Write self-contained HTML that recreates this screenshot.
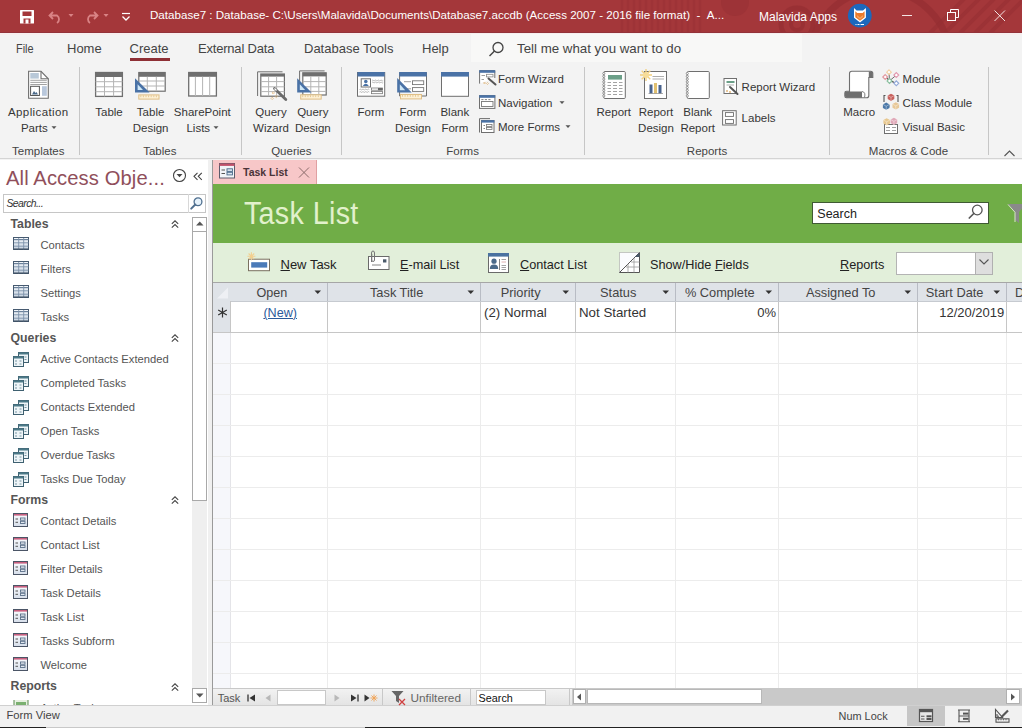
<!DOCTYPE html>
<html><head><meta charset="utf-8">
<style>
*{margin:0;padding:0;box-sizing:border-box}
html,body{width:1022px;height:728px;overflow:hidden;background:#f3f3f3;font-family:"Liberation Sans",sans-serif;color:#444;position:relative}
.a{position:absolute}
.t{position:absolute;white-space:nowrap;line-height:1}
svg{overflow:visible}
</style></head>
<body>
<div class="a" style="left:0px;top:0px;width:1022px;height:33px;background:#a4373a"></div>
<svg class="a" style="left:0px;top:0px;" width="1022" height="33" viewBox="0 0 1022 33"><defs><clipPath id="tb"><rect x="0" y="0" width="1022" height="33"/></clipPath></defs>
<g clip-path="url(#tb)" fill="none" stroke="#962f33" stroke-opacity="0.75">
<path d="M622 0 V33 M628 0 V33 M634 0 V33 M640 0 V33 M646 0 V33 M652 0 V33 M658 0 V33 M664 0 V33 M670 0 V33 M676 0 V33 M682 0 V33 M688 0 V33 M694 0 V33 M700 0 V33" stroke-width="2.5" stroke-opacity="0.35"/>
<circle cx="735" cy="2" r="14" fill="#962f33" stroke="none" fill-opacity="0.5"/>
<circle cx="797" cy="24" r="16" stroke-width="5"/>
<circle cx="797" cy="24" r="6" stroke-width="4"/>
<circle cx="880" cy="60" r="70" stroke-width="7"/>
<path d="M930 33 L975 -12 M945 33 L990 -12 M960 33 L1005 -12 M975 33 L1020 -12 M990 33 L1035 -12" stroke-width="4" stroke-opacity="0.55"/>
</g></svg>
<svg class="a" style="left:19px;top:9px;" width="16" height="15" viewBox="0 0 16 15"><rect x="1" y="1" width="14" height="13.5" fill="#fff" rx="0.5"/><rect x="3.5" y="2.5" width="9" height="4.5" fill="#a4373a"/><rect x="4.5" y="9.5" width="7" height="5" fill="#a4373a"/><rect x="6.5" y="10.5" width="3" height="4" fill="#fff"/></svg>
<svg class="a" style="left:48px;top:10px;" width="16" height="14" viewBox="0 0 16 14"><path d="M5 2 L1.5 5.5 L5 9 M1.5 5.5 H9 A4.5 4.5 0 0 1 9 13" fill="none" stroke="#d98385" stroke-width="1.8"/></svg>
<svg class="a" style="left:68px;top:13px;" width="6" height="5" viewBox="0 0 6 5"><path d="M0.5 1 H5.5 L3 4 Z" fill="#d98385"/></svg>
<svg class="a" style="left:83px;top:10px;" width="16" height="14" viewBox="0 0 16 14"><path d="M11 2 L14.5 5.5 L11 9 M14.5 5.5 H7 A4.5 4.5 0 0 0 7 13" fill="none" stroke="#d98385" stroke-width="1.8"/></svg>
<svg class="a" style="left:103px;top:13px;" width="6" height="5" viewBox="0 0 6 5"><path d="M0.5 1 H5.5 L3 4 Z" fill="#d98385"/></svg>
<svg class="a" style="left:121px;top:12px;" width="10" height="9" viewBox="0 0 10 9"><path d="M1 1.5 H9" stroke="#fff" stroke-width="1.2"/><path d="M1.5 4.5 L5 8 L8.5 4.5" fill="none" stroke="#fff" stroke-width="1.3"/></svg>
<div class="t" style="font-size:11.6px;color:#fff;top:9.00px;left:150px;">Database7 : Database- C:\Users\Malavida\Documents\Database7.accdb (Access 2007 - 2016 file format) &nbsp;- &nbsp;A...</div>
<div class="t" style="font-size:12px;color:#fff;top:11.00px;left:759px;">Malavida Apps</div>
<svg class="a" style="left:847px;top:3px;" width="26" height="26" viewBox="0 0 26 26"><circle cx="12.8" cy="12.6" r="11.9" fill="#1c68bd"/>
<path d="M7 4.9 L9.6 7.6 H16 L18.9 4.9 V14.8 L13 19.6 L7 14.8 Z" fill="#fff"/>
<path d="M8.3 8.2 L10.2 10 H15.6 L17.6 8.2 V14.3 L13 17.8 L8.3 14.3 Z" fill="#ec7a2a"/>
<path d="M10 12 L13 14.5 L16 12 V14 L13 16.5 L10 14 Z" fill="#f6b070" opacity="0.7"/>
<path d="M8.5 21.5 H9.5 M10.5 21.5 H12.5 M13.5 21.5 H17" stroke="#fff" stroke-width="1"/></svg>
<div class="a" style="left:902px;top:15px;width:10px;height:1px;background:#f4e4e4"></div>
<svg class="a" style="left:947px;top:9px;" width="12" height="12" viewBox="0 0 12 12"><rect x="0.5" y="3.5" width="8" height="8" fill="none" stroke="#fff"/><path d="M3.5 3.5 V0.5 H11.5 V8.5 H8.5" fill="none" stroke="#fff"/></svg>
<svg class="a" style="left:993.5px;top:9.5px;" width="12" height="12" viewBox="0 0 12 12"><path d="M0.5 0.5 L11 11 M11 0.5 L0.5 11" stroke="#f4e4e4" stroke-width="1"/></svg>
<div class="a" style="left:0px;top:33px;width:1022px;height:30px;background:#f3f3f3"></div>
<div class="a" style="left:0px;top:32px;width:1022px;height:1px;background:#93333a"></div>
<div class="a" style="left:0px;top:33px;width:1022px;height:2px;background:#f7eeee"></div>
<div class="a" style="left:471px;top:34px;width:331px;height:28px;background:#f8f8f7"></div>
<div class="t" style="font-size:13px;color:#444;top:42.00px;left:15.5px;transform:scaleX(0.84);transform-origin:0 0">File</div>
<div class="t" style="font-size:13px;color:#444;top:42.00px;left:67px;">Home</div>
<div class="t" style="font-size:13px;color:#444;top:42.00px;left:129.5px;">Create</div>
<div class="a" style="left:130px;top:58px;width:40px;height:2.6px;background:#8e2f35"></div>
<div class="t" style="font-size:13px;color:#444;top:42.00px;left:198px;letter-spacing:-0.2px">External Data</div>
<div class="t" style="font-size:13px;color:#444;top:42.00px;left:304px;">Database Tools</div>
<div class="t" style="font-size:13px;color:#444;top:42.00px;left:422px;">Help</div>
<svg class="a" style="left:488px;top:40.6px;" width="17" height="17" viewBox="0 0 17 17"><circle cx="10" cy="6.5" r="5" fill="none" stroke="#444" stroke-width="1.3"/><path d="M6.5 10 L1.5 15" stroke="#444" stroke-width="1.5"/></svg>
<div class="t" style="font-size:13.3px;color:#444;top:42.00px;left:517px;">Tell me what you want to do</div>
<div class="a" style="left:0px;top:63px;width:1022px;height:96px;background:#f3f3f3"></div>
<div class="a" style="left:0px;top:158px;width:1022px;height:1px;background:#d4d4d4"></div>
<div class="a" style="left:79px;top:67px;width:1px;height:88px;background:#c6c6c6"></div>
<div class="a" style="left:241px;top:67px;width:1px;height:88px;background:#c6c6c6"></div>
<div class="a" style="left:341px;top:67px;width:1px;height:88px;background:#c6c6c6"></div>
<div class="a" style="left:584px;top:67px;width:1px;height:88px;background:#c6c6c6"></div>
<div class="a" style="left:829px;top:67px;width:1px;height:88px;background:#c6c6c6"></div>
<div class="a" style="left:988px;top:67px;width:1px;height:88px;background:#c6c6c6"></div>
<div class="t" style="font-size:11.5px;color:#363636;top:107.00px;left:-1.7000000000000028px;width:80px;text-align:center;letter-spacing:0.4px">Application</div>
<div class="t" style="font-size:11.5px;color:#363636;top:123.00px;left:-5.700000000000003px;width:80px;text-align:center;">Parts</div>
<div class="t" style="font-size:11.5px;color:#363636;top:107.00px;left:69.0px;width:80px;text-align:center;">Table</div>
<div class="t" style="font-size:11.5px;color:#363636;top:107.00px;left:110.6px;width:80px;text-align:center;">Table</div>
<div class="t" style="font-size:11.5px;color:#363636;top:123.00px;left:110.6px;width:80px;text-align:center;">Design</div>
<div class="t" style="font-size:11.5px;color:#363636;top:107.00px;left:162.3px;width:80px;text-align:center;">SharePoint</div>
<div class="t" style="font-size:11.5px;color:#363636;top:123.00px;left:158.3px;width:80px;text-align:center;">Lists</div>
<div class="t" style="font-size:11.5px;color:#363636;top:107.00px;left:231.0px;width:80px;text-align:center;">Query</div>
<div class="t" style="font-size:11.5px;color:#363636;top:123.00px;left:231.0px;width:80px;text-align:center;">Wizard</div>
<div class="t" style="font-size:11.5px;color:#363636;top:107.00px;left:272.8px;width:80px;text-align:center;">Query</div>
<div class="t" style="font-size:11.5px;color:#363636;top:123.00px;left:272.8px;width:80px;text-align:center;">Design</div>
<div class="t" style="font-size:11.5px;color:#363636;top:107.00px;left:331.0px;width:80px;text-align:center;">Form</div>
<div class="t" style="font-size:11.5px;color:#363636;top:107.00px;left:373.0px;width:80px;text-align:center;">Form</div>
<div class="t" style="font-size:11.5px;color:#363636;top:123.00px;left:373.0px;width:80px;text-align:center;">Design</div>
<div class="t" style="font-size:11.5px;color:#363636;top:107.00px;left:414.8px;width:80px;text-align:center;">Blank</div>
<div class="t" style="font-size:11.5px;color:#363636;top:123.00px;left:414.8px;width:80px;text-align:center;">Form</div>
<div class="t" style="font-size:11.5px;color:#363636;top:107.00px;left:573.8px;width:80px;text-align:center;">Report</div>
<div class="t" style="font-size:11.5px;color:#363636;top:107.00px;left:616.0px;width:80px;text-align:center;">Report</div>
<div class="t" style="font-size:11.5px;color:#363636;top:123.00px;left:616.0px;width:80px;text-align:center;">Design</div>
<div class="t" style="font-size:11.5px;color:#363636;top:107.00px;left:657.7px;width:80px;text-align:center;">Blank</div>
<div class="t" style="font-size:11.5px;color:#363636;top:123.00px;left:657.7px;width:80px;text-align:center;">Report</div>
<div class="t" style="font-size:11.5px;color:#363636;top:107.00px;left:819.2px;width:80px;text-align:center;">Macro</div>
<svg class="a" style="left:51px;top:126px;" width="6" height="4" viewBox="0 0 6 4"><path d="M0.5 0.3 H5.5 L3 3 Z" fill="#555"/></svg>
<svg class="a" style="left:213px;top:126px;" width="6" height="4" viewBox="0 0 6 4"><path d="M0.5 0.3 H5.5 L3 3 Z" fill="#555"/></svg>
<div class="t" style="font-size:11.5px;color:#444;top:146.00px;left:-21.700000000000003px;width:120px;text-align:center;">Templates</div>
<div class="t" style="font-size:11.5px;color:#444;top:146.00px;left:99.80000000000001px;width:120px;text-align:center;">Tables</div>
<div class="t" style="font-size:11.5px;color:#444;top:146.00px;left:231.3px;width:120px;text-align:center;">Queries</div>
<div class="t" style="font-size:11.5px;color:#444;top:146.00px;left:402.6px;width:120px;text-align:center;">Forms</div>
<div class="t" style="font-size:11.5px;color:#444;top:146.00px;left:647.0px;width:120px;text-align:center;">Reports</div>
<div class="t" style="font-size:11.5px;color:#444;top:146.00px;left:848.5px;width:120px;text-align:center;">Macros &amp; Code</div>
<div class="t" style="font-size:11.5px;color:#363636;top:74.00px;left:498px;">Form Wizard</div>
<div class="t" style="font-size:11.5px;color:#363636;top:98.00px;left:498px;">Navigation</div>
<svg class="a" style="left:559px;top:101px;" width="6" height="4" viewBox="0 0 6 4"><path d="M0.5 0.3 H5.5 L3 3 Z" fill="#555"/></svg>
<div class="t" style="font-size:11.5px;color:#363636;top:122.00px;left:498px;">More Forms</div>
<svg class="a" style="left:565px;top:125px;" width="6" height="4" viewBox="0 0 6 4"><path d="M0.5 0.3 H5.5 L3 3 Z" fill="#555"/></svg>
<div class="t" style="font-size:11.5px;color:#363636;top:82.00px;left:741.6px;">Report Wizard</div>
<div class="t" style="font-size:11.5px;color:#363636;top:113.00px;left:741.6px;">Labels</div>
<div class="t" style="font-size:11.5px;color:#363636;top:74.00px;left:902.6px;">Module</div>
<div class="t" style="font-size:11.5px;color:#363636;top:98.00px;left:902.6px;">Class Module</div>
<div class="t" style="font-size:11.5px;color:#363636;top:122.00px;left:902.6px;">Visual Basic</div>
<svg class="a" style="left:1003.5px;top:149.5px;" width="11" height="7" viewBox="0 0 11 7"><path d="M0.5 6 L5.5 1 L10.5 6" fill="none" stroke="#555" stroke-width="1.1"/></svg>
<svg class="a" style="left:0px;top:0px;" width="60" height="110" viewBox="0 0 60 110">
<path d="M28.6 71.3 H41 L48.3 78.8 V98.3 H28.6 Z" fill="#fff" stroke="#6f6f6f" stroke-width="1.1"/>
<path d="M41 71.3 V78.8 H48.3" fill="none" stroke="#6f6f6f" stroke-width="1.1"/>
<rect x="30.3" y="73" width="8.5" height="5.6" fill="#b8c8d8"/>
<path d="M30.3 80.3 H46.8 M30.3 82.4 H46.8 M30.3 84.5 H46.8" stroke="#8a8a8a" stroke-width="0.8"/>
<rect x="30.6" y="86.3" width="8.8" height="9.2" fill="#fff" stroke="#555" stroke-width="1"/>
<path d="M32 94.5 L34 91 L35.5 93 L36.5 92 L38 94.5 Z" fill="#4b6a8a"/>
<rect x="42" y="86.2" width="4.8" height="9.6" fill="#b9c8dc"/>
</svg>
<svg class="a" style="left:0px;top:0px;" width="140" height="110" viewBox="0 0 140 110"><rect x="95.6" y="72.5" width="26.80000000000001" height="23.900000000000006" fill="#fff" stroke="#6f6f6f" stroke-width="1.3"/><rect x="95.6" y="72.5" width="26.80000000000001" height="4.5" fill="#6f6f6f"/><path d="M104.5 77 V96.4" stroke="#b4b4b4" stroke-width="1"/><path d="M113.6 77 V96.4" stroke="#b4b4b4" stroke-width="1"/><path d="M95.6 81.7 H122.4" stroke="#b4b4b4" stroke-width="1"/><path d="M95.6 86.8 H122.4" stroke="#b4b4b4" stroke-width="1"/><path d="M95.6 91.7 H122.4" stroke="#b4b4b4" stroke-width="1"/></svg>
<svg class="a" style="left:0px;top:0px;" width="180" height="110" viewBox="0 0 180 110"><rect x="138.8" y="72.5" width="26.399999999999977" height="18.700000000000003" fill="#fff" stroke="#6f6f6f" stroke-width="1.2"/><rect x="138.8" y="72.5" width="26.399999999999977" height="4.299999999999997" fill="#6f6f6f"/><path d="M147.3 76.8 V91.2" stroke="#b4b4b4" stroke-width="1"/><path d="M156.3 76.8 V91.2" stroke="#b4b4b4" stroke-width="1"/><path d="M138.8 81 H165.2" stroke="#b4b4b4" stroke-width="1"/><path d="M138.8 86 H165.2" stroke="#b4b4b4" stroke-width="1"/><path d="M135 78.2 L149.6 92.4 H135 Z" fill="#4a72a6"/><path d="M137.6 84.164 L143.03 90.0 H137.6 Z" fill="#cfe8f8"/><rect x="138.8" y="94.9" width="20.19999999999999" height="4.199999999999989" fill="#fdf1d6" stroke="#e0bf86" stroke-width="1"/><path d="M140.8 95.4 V97.2" stroke="#e0bf86" stroke-width="0.8"/><path d="M143.4 95.4 V97.2" stroke="#e0bf86" stroke-width="0.8"/><path d="M146.0 95.4 V97.2" stroke="#e0bf86" stroke-width="0.8"/><path d="M148.6 95.4 V97.2" stroke="#e0bf86" stroke-width="0.8"/><path d="M151.2 95.4 V97.2" stroke="#e0bf86" stroke-width="0.8"/><path d="M153.79999999999998 95.4 V97.2" stroke="#e0bf86" stroke-width="0.8"/><path d="M156.39999999999998 95.4 V97.2" stroke="#e0bf86" stroke-width="0.8"/></svg>
<svg class="a" style="left:0px;top:0px;" width="230" height="110" viewBox="0 0 230 110"><rect x="188.7" y="72.5" width="27.700000000000017" height="23.5" fill="#fff" stroke="#6f6f6f" stroke-width="1.3"/><rect x="188.7" y="72.5" width="27.700000000000017" height="4.299999999999997" fill="#6f6f6f"/><path d="M195.4 76.8 V96" stroke="#b4b4b4" stroke-width="1"/><path d="M202.6 76.8 V96" stroke="#b4b4b4" stroke-width="1"/><path d="M209.7 76.8 V96" stroke="#b4b4b4" stroke-width="1"/></svg>
<svg class="a" style="left:0px;top:0px;" width="300" height="110" viewBox="0 0 300 110"><path d="M257.6 96 V71.8 H282.5" fill="none" stroke="#6f6f6f" stroke-width="1"/><rect x="260.8" y="74" width="23.599999999999966" height="22.200000000000003" fill="#fff" stroke="#6f6f6f" stroke-width="1.2"/><rect x="260.8" y="74" width="23.599999999999966" height="2.5999999999999943" fill="#6f6f6f"/><path d="M268.6 76.6 V96.2" stroke="#b4b4b4" stroke-width="1"/><path d="M276.6 76.6 V96.2" stroke="#b4b4b4" stroke-width="1"/><path d="M260.8 81.6 H284.4" stroke="#b4b4b4" stroke-width="1"/><path d="M260.8 86.8 H284.4" stroke="#b4b4b4" stroke-width="1"/><path d="M260.8 91.6 H284.4" stroke="#b4b4b4" stroke-width="1"/><path d="M274.5 88.5 L285.8 99.5" stroke="#6a6a6a" stroke-width="2.8" stroke-linecap="round"/><path d="M274.5 88.5 L276.5 90.5" stroke="#fff" stroke-width="1.2"/><path d="M273.3 91.7 l1.2 1.2 l-1.2 1.2 l-1.2 -1.2 Z M276.3 95.3 l1.2 1.2 l-1.2 1.2 l-1.2 -1.2 Z M272.2 97.2 l1.2 1.2 l-1.2 1.2 l-1.2 -1.2 Z" fill="none" stroke="#e0b070" stroke-width="0.7"/></svg>
<svg class="a" style="left:0px;top:0px;" width="340" height="110" viewBox="0 0 340 110"><path d="M299.6 89 V70.9 H324.6" fill="none" stroke="#6f6f6f" stroke-width="1"/><rect x="302.8" y="72.8" width="23.399999999999977" height="22.200000000000003" fill="#fff" stroke="#6f6f6f" stroke-width="1.2"/><rect x="302.8" y="72.8" width="23.399999999999977" height="3.6000000000000085" fill="#6f6f6f"/><path d="M310.8 76.4 V95" stroke="#b4b4b4" stroke-width="1"/><path d="M318.8 76.4 V95" stroke="#b4b4b4" stroke-width="1"/><path d="M302.8 81.6 H326.2" stroke="#b4b4b4" stroke-width="1"/><path d="M302.8 86.8 H326.2" stroke="#b4b4b4" stroke-width="1"/><path d="M302.8 91.4 H326.2" stroke="#b4b4b4" stroke-width="1"/><path d="M297.2 78.3 L311.6 92.4 H297.2 Z" fill="#4a72a6"/><path d="M299.8 84.222 L305.12 90.0 H299.8 Z" fill="#cfe8f8"/><rect x="300.7" y="94.8" width="20.5" height="4.299999999999997" fill="#fdf1d6" stroke="#e0bf86" stroke-width="1"/><path d="M302.7 95.3 V97.1" stroke="#e0bf86" stroke-width="0.8"/><path d="M305.3 95.3 V97.1" stroke="#e0bf86" stroke-width="0.8"/><path d="M307.90000000000003 95.3 V97.1" stroke="#e0bf86" stroke-width="0.8"/><path d="M310.50000000000006 95.3 V97.1" stroke="#e0bf86" stroke-width="0.8"/><path d="M313.1000000000001 95.3 V97.1" stroke="#e0bf86" stroke-width="0.8"/><path d="M315.7000000000001 95.3 V97.1" stroke="#e0bf86" stroke-width="0.8"/><path d="M318.3000000000001 95.3 V97.1" stroke="#e0bf86" stroke-width="0.8"/></svg>
<svg class="a" style="left:0px;top:0px;" width="400" height="110" viewBox="0 0 400 110">
<rect x="357.5" y="72.5" width="27.2" height="23.7" fill="#fff" stroke="#6f6f6f" stroke-width="1"/>
<rect x="357.5" y="72" width="27.2" height="4.5" fill="#4a72a6"/>
<rect x="361.2" y="78.8" width="9.3" height="8.2" fill="#fff" stroke="#6f6f6f" stroke-width="1"/>
<circle cx="365.8" cy="81.5" r="1.8" fill="#4a72a6"/><path d="M362.8 86 Q365.8 81.5 368.8 86 Z" fill="#4a72a6"/>
<path d="M372 80.5 q0.7 -0.8 1.4 0 t1.4 0 t1.4 0 t1.4 0 t1.4 0 t1.4 0 t1.4 0 t1.4 0 M372 82.5 q0.7 -0.8 1.4 0 t1.4 0 t1.4 0 t1.4 0 t1.4 0 t1.4 0 t1.4 0 t1.4 0" fill="none" stroke="#888" stroke-width="0.6"/>
<path d="M359.5 89.5 q0.7 -0.8 1.4 0 t1.4 0 t1.4 0 t1.4 0 t1.4 0 t1.4 0 t1.4 0 M359.5 92 q0.7 -0.8 1.4 0 t1.4 0 t1.4 0 t1.4 0 t1.4 0 t1.4 0 t1.4 0" fill="none" stroke="#888" stroke-width="0.6"/>
<rect x="371.5" y="88" width="11" height="2.2" fill="#fff" stroke="#777" stroke-width="0.8"/><rect x="378" y="88" width="4.5" height="2.2" fill="#666"/>
<rect x="371.5" y="91.5" width="11" height="2.2" fill="#fff" stroke="#777" stroke-width="0.8"/>
</svg>
<svg class="a" style="left:0px;top:0px;" width="440" height="110" viewBox="0 0 440 110">
<path d="M426.5 93 V72.5 H399.6 V90" fill="#fff" stroke="#6f6f6f" stroke-width="1"/>
<path d="M399.6 90 V96 H426.5 V93" fill="none" stroke="#6f6f6f" stroke-width="1"/>
<rect x="399.2" y="72" width="27.6" height="4.5" fill="#4a72a6"/>
<path d="M404 81.7 H411 M404 88.8 H411" stroke="#888" stroke-width="0.8"/>
<rect x="412.5" y="80.8" width="11.2" height="3.8" fill="#fff" stroke="#777" stroke-width="0.9"/>
<rect x="412.5" y="87.6" width="11.2" height="3.8" fill="#fff" stroke="#777" stroke-width="0.9"/>
<path d="M397.2 78 L411.7 92.6 H397.2 Z" fill="#4a72a6"/><path d="M399.8 84.13199999999999 L405.175 90.19999999999999 H399.8 Z" fill="#cfe8f8"/><rect x="400.5" y="94.5" width="21" height="4.400000000000006" fill="#fdf1d6" stroke="#e0bf86" stroke-width="1"/><path d="M402.5 95 V96.8" stroke="#e0bf86" stroke-width="0.8"/><path d="M405.1 95 V96.8" stroke="#e0bf86" stroke-width="0.8"/><path d="M407.70000000000005 95 V96.8" stroke="#e0bf86" stroke-width="0.8"/><path d="M410.30000000000007 95 V96.8" stroke="#e0bf86" stroke-width="0.8"/><path d="M412.9000000000001 95 V96.8" stroke="#e0bf86" stroke-width="0.8"/><path d="M415.5000000000001 95 V96.8" stroke="#e0bf86" stroke-width="0.8"/><path d="M418.10000000000014 95 V96.8" stroke="#e0bf86" stroke-width="0.8"/></svg>
<svg class="a" style="left:0px;top:0px;" width="480" height="110" viewBox="0 0 480 110"><rect x="441.5" y="72.5" width="27" height="23.8" fill="#fff" stroke="#6f6f6f" stroke-width="1"/><rect x="441" y="72" width="28" height="4.6" fill="#4a72a6"/></svg>
<svg class="a" style="left:0px;top:0px;" width="500" height="140" viewBox="0 0 500 140">
<path d="M479.6 83.6 V70.6 H494.8 V78" fill="#fff" stroke="#6f6f6f" stroke-width="1"/>
<rect x="479.2" y="70.2" width="16" height="2.6" fill="#4a72a6"/>
<path d="M481.5 75.5 H485 M481.5 79.5 H484" stroke="#888" stroke-width="0.8"/>
<rect x="486.5" y="74.3" width="6.5" height="2.6" fill="none" stroke="#888" stroke-width="0.8"/>
<path d="M488.5 78.5 L495.5 84.5" stroke="#555" stroke-width="2" stroke-linecap="round"/>
<path d="M484.5 82 l1 1 l-1 1 l-1 -1 Z M487.5 82.5 l1 1 l-1 1 l-1 -1 Z" fill="none" stroke="#e0b070" stroke-width="0.7"/>
</svg>
<svg class="a" style="left:0px;top:0px;" width="500" height="140" viewBox="0 0 500 140">
<rect x="479.5" y="95.6" width="15.4" height="12.8" fill="#fff" stroke="#6f6f6f" stroke-width="1"/>
<rect x="479.2" y="95.2" width="16" height="2.6" fill="#4a72a6"/>
<path d="M481.3 99.6 H483.5 M484.8 99.6 H487 M488.3 99.6 H490.5" stroke="#777" stroke-width="0.9"/>
<rect x="481.5" y="101.5" width="11.5" height="5" fill="none" stroke="#777" stroke-width="0.9"/>
</svg>
<svg class="a" style="left:0px;top:0px;" width="500" height="140" viewBox="0 0 500 140">
<path d="M479.5 132.5 V118.6 H490" fill="none" stroke="#6f6f6f" stroke-width="1"/>
<rect x="481.5" y="120.5" width="12.5" height="12" fill="#fff" stroke="#6f6f6f" stroke-width="1"/>
<rect x="481.2" y="120.2" width="13.2" height="2.4" fill="#4a72a6"/>
<path d="M483.5 125.5 H485 M483.5 128.5 H485" stroke="#777" stroke-width="0.9"/>
<rect x="486.5" y="124.5" width="5.5" height="2" fill="none" stroke="#777" stroke-width="0.8"/><rect x="486.5" y="127.5" width="5.5" height="2" fill="none" stroke="#777" stroke-width="0.8"/>
</svg>
<svg class="a" style="left:0px;top:0px;" width="640" height="110" viewBox="0 0 640 110">
<rect x="603.8" y="71.5" width="21.5" height="27" fill="#fff" stroke="#6f6f6f" stroke-width="1" rx="1"/>
<rect x="608" y="75" width="14" height="4.6" fill="#6b9f88"/>
<path d="M607.5 82.5 H611 M613 82.5 H617 M619 82.5 H622.5 M607.5 85.5 H611 M613 85.5 H617 M619 85.5 H622.5 M607.5 88.5 H611 M613 88.5 H617 M619 88.5 H622.5 M607.5 91.5 H611 M613 91.5 H617 M619 91.5 H622.5 M607.5 94.5 H611 M613 94.5 H617 M619 94.5 H622.5" stroke="#999" stroke-width="0.9"/>
<circle cx="603.8" cy="73.5" r="1.1" fill="#fff" stroke="#777" stroke-width="0.7"/><circle cx="603.8" cy="76.3" r="1.1" fill="#fff" stroke="#777" stroke-width="0.7"/><circle cx="603.8" cy="79.1" r="1.1" fill="#fff" stroke="#777" stroke-width="0.7"/><circle cx="603.8" cy="81.89999999999999" r="1.1" fill="#fff" stroke="#777" stroke-width="0.7"/><circle cx="603.8" cy="84.69999999999999" r="1.1" fill="#fff" stroke="#777" stroke-width="0.7"/><circle cx="603.8" cy="87.49999999999999" r="1.1" fill="#fff" stroke="#777" stroke-width="0.7"/><circle cx="603.8" cy="90.29999999999998" r="1.1" fill="#fff" stroke="#777" stroke-width="0.7"/><circle cx="603.8" cy="93.09999999999998" r="1.1" fill="#fff" stroke="#777" stroke-width="0.7"/><circle cx="603.8" cy="95.89999999999998" r="1.1" fill="#fff" stroke="#777" stroke-width="0.7"/></svg>
<svg class="a" style="left:0px;top:0px;" width="680" height="110" viewBox="0 0 680 110">
<rect x="644.5" y="71.5" width="22" height="27" fill="#fff" stroke="#6f6f6f" stroke-width="1"/>
<path d="M652.5 76.5 H664 M652.5 79 H664" stroke="#999" stroke-width="0.8"/>
<rect x="649.5" y="84.5" width="3" height="9" fill="#48628c"/><rect x="654" y="83" width="3" height="10.5" fill="#e0c070"/><rect x="658.5" y="85" width="3" height="8.5" fill="#48628c"/>
<path d="M648.5 93.5 H663" stroke="#888" stroke-width="0.7"/>
<g stroke="#f2cf7e" stroke-width="1.3"><path d="M646 69 V81 M640 75 H652 M641.7 70.7 L650.3 79.3 M650.3 70.7 L641.7 79.3"/></g>
<circle cx="646" cy="75" r="3" fill="#f7dc98"/>
</svg>
<svg class="a" style="left:0px;top:0px;" width="720" height="110" viewBox="0 0 720 110"><rect x="687.3" y="71.5" width="22" height="27" fill="#fff" stroke="#6f6f6f" stroke-width="1" rx="1"/><circle cx="687.3" cy="73.5" r="1.1" fill="#fff" stroke="#777" stroke-width="0.7"/><circle cx="687.3" cy="76.3" r="1.1" fill="#fff" stroke="#777" stroke-width="0.7"/><circle cx="687.3" cy="79.1" r="1.1" fill="#fff" stroke="#777" stroke-width="0.7"/><circle cx="687.3" cy="81.89999999999999" r="1.1" fill="#fff" stroke="#777" stroke-width="0.7"/><circle cx="687.3" cy="84.69999999999999" r="1.1" fill="#fff" stroke="#777" stroke-width="0.7"/><circle cx="687.3" cy="87.49999999999999" r="1.1" fill="#fff" stroke="#777" stroke-width="0.7"/><circle cx="687.3" cy="90.29999999999998" r="1.1" fill="#fff" stroke="#777" stroke-width="0.7"/><circle cx="687.3" cy="93.09999999999998" r="1.1" fill="#fff" stroke="#777" stroke-width="0.7"/><circle cx="687.3" cy="95.89999999999998" r="1.1" fill="#fff" stroke="#777" stroke-width="0.7"/></svg>
<svg class="a" style="left:0px;top:0px;" width="760" height="110" viewBox="0 0 760 110">
<rect x="724" y="78.5" width="12.5" height="15" fill="#fff" stroke="#6f6f6f" stroke-width="1"/>
<rect x="726.5" y="81" width="8" height="2" fill="#6b9f88"/>
<path d="M726.5 85 H734" stroke="#999" stroke-width="0.8"/>
<path d="M730 87 L737.5 94" stroke="#555" stroke-width="2" stroke-linecap="round"/>
<path d="M727 90 l1 1 l-1 1 l-1 -1 Z M730 91 l1 1 l-1 1 l-1 -1 Z" fill="none" stroke="#e0b070" stroke-width="0.7"/>
</svg>
<svg class="a" style="left:0px;top:0px;" width="760" height="140" viewBox="0 0 760 140">
<rect x="722.6" y="110.7" width="13.6" height="14.3" fill="#fff" stroke="#6f6f6f" stroke-width="1"/>
<rect x="725.4" y="112.6" width="8.1" height="3.8" fill="none" stroke="#6f6f6f" stroke-width="0.9"/>
<rect x="725.4" y="119.6" width="8.1" height="3.8" fill="none" stroke="#6f6f6f" stroke-width="0.9"/>
</svg>
<svg class="a" style="left:0px;top:0px;" width="880" height="110" viewBox="0 0 880 110">
<path d="M849.5 92 V73.5 Q849.5 71.2 851.8 71.2 H870.5 Q872.8 71.2 872.8 73.5 V77.5 H868.8 V95.5 Q868.8 97.8 866.5 97.8 H846.5 Q844.8 97.8 844.8 96 V93 Q844.8 91.2 846.5 91.2 H849.5" fill="#fff" stroke="#6f6f6f" stroke-width="1.1"/>
<path d="M868.8 71.5 H871 Q872.8 71.5 872.8 73.5 V77.5 H868.8 Z" fill="#6f6f6f"/>
<path d="M845 91.5 H862 V97.8 H846.5 Q845 97.8 845 96 Z" fill="#6f6f6f"/>
<path d="M862 91.5 Q866 92 864.5 97.5" fill="#fff" stroke="#6f6f6f" stroke-width="0.9"/>
</svg>
<svg class="a" style="left:0px;top:0px;" width="910" height="140" viewBox="0 0 910 140">
<path d="M885.2 77 L889.5 80.9 L896.3 83.3 M889 72.2 L889.5 80.9 M896.3 75.1 L889.5 80.9" stroke="#707070" stroke-width="1"/>
<g fill="#fff" stroke-width="1.2">
<path d="M885.2 74.6 l2.4 2.4 l-2.4 2.4 l-2.4 -2.4 Z" stroke="#e29aa0"/>
<path d="M889 69.9 l2.3 2.3 l-2.3 2.3 l-2.3 -2.3 Z" stroke="#f2d2a8"/>
<path d="M896.3 72.7 l2.4 2.4 l-2.4 2.4 l-2.4 -2.4 Z" stroke="#e29ab0"/>
<path d="M889.5 78.5 l2.4 2.4 l-2.4 2.4 l-2.4 -2.4 Z" stroke="#8cc0a0"/>
<path d="M896.3 80.9 l2.4 2.4 l-2.4 2.4 l-2.4 -2.4 Z" stroke="#94aad8"/>
</g>
<path d="M884 102 V95.5 H885.5 M898 102 V95.5 H896.5" fill="none" stroke="#555" stroke-width="1.1"/>
<path d="M887.5 106 H889.5" stroke="#555" stroke-width="1"/>
<path d="M891 93.7 L894.3 95.5 V99.1 L891 100.89999999999999 L887.7 99.1 V95.5 Z" fill="#c8605c"/><path d="M887.7 95.5 L891 97.3 L894.3 95.5 M891 97.3 V100.89999999999999" fill="none" stroke="#fff" stroke-opacity="0.55" stroke-width="0.7"/><path d="M886.2 102.60000000000001 L889.5 104.4 V108.0 L886.2 109.8 L882.9000000000001 108.0 V104.4 Z" fill="#4a78a8"/><path d="M882.9000000000001 104.4 L886.2 106.2 L889.5 104.4 M886.2 106.2 V109.8" fill="none" stroke="#fff" stroke-opacity="0.55" stroke-width="0.7"/><path d="M895.8 102.30000000000001 L899.0999999999999 104.10000000000001 V107.7 L895.8 109.5 L892.5 107.7 V104.10000000000001 Z" fill="#e8c898"/><path d="M892.5 104.10000000000001 L895.8 105.9 L899.0999999999999 104.10000000000001 M895.8 105.9 V109.5" fill="none" stroke="#fff" stroke-opacity="0.55" stroke-width="0.7"/>
<rect x="884.5" y="124.5" width="13" height="9" fill="#fff" stroke="#6f6f6f" stroke-width="1"/>
<path d="M886 127.5 H890 M892 127.5 H896 M886 130.5 H890 M892 130.5 H896" stroke="#888" stroke-width="0.8"/>
<path d="M886.7 118.2 L890.0 120.0 V123.6 L886.7 125.39999999999999 L883.4000000000001 123.6 V120.0 Z" fill="#e8c890"/><path d="M883.4000000000001 120.0 L886.7 121.8 L890.0 120.0 M886.7 121.8 V125.39999999999999" fill="none" stroke="#fff" stroke-opacity="0.55" stroke-width="0.7"/><path d="M893.9 117.7 L897.1999999999999 119.5 V123.1 L893.9 124.89999999999999 L890.6 123.1 V119.5 Z" fill="#e0a8b8"/><path d="M890.6 119.5 L893.9 121.3 L897.1999999999999 119.5 M893.9 121.3 V124.89999999999999" fill="none" stroke="#fff" stroke-opacity="0.55" stroke-width="0.7"/></svg>
<div class="a" style="left:0px;top:160px;width:208px;height:545px;background:#fff"></div>
<div class="a" style="left:208px;top:160px;width:4px;height:545px;background:#f0f0f0"></div>
<div class="a" style="left:212px;top:160px;width:1px;height:546px;background:#9a9a9a"></div>
<div class="t" style="font-size:20.2px;color:#904f5b;top:168.00px;left:6px;letter-spacing:0.1px">All Access Obje...</div>
<svg class="a" style="left:172px;top:168px;" width="15" height="15" viewBox="0 0 15 15"><circle cx="7.5" cy="7.5" r="6" fill="#fff" stroke="#444" stroke-width="1.1"/><path d="M4.5 6 H10.5 L7.5 9.3 Z" fill="#444"/></svg>
<svg class="a" style="left:193px;top:172px;" width="10" height="9" viewBox="0 0 10 9"><path d="M4.5 0.8 L1 4.3 L4.5 7.8 M8.8 0.8 L5.3 4.3 L8.8 7.8" fill="none" stroke="#444" stroke-width="1.1"/></svg>
<div class="a" style="left:3px;top:194px;width:203px;height:19px;background:#fff;border:1px solid #c6c6c6"></div>
<div class="a" style="left:188px;top:194px;width:18px;height:19px;border-left:1px solid #d8d8d8"></div>
<div class="t" style="font-size:10.4px;color:#333;top:199.00px;font-style:italic;left:6.4px;letter-spacing:-0.55px">Search...</div>
<svg class="a" style="left:189px;top:196px;" width="16" height="15" viewBox="0 0 16 15"><circle cx="9" cy="5.8" r="3.9" fill="#e6f2fb" stroke="#4f6f8f" stroke-width="1.3"/><path d="M6.3 8.5 L2.2 12.6" stroke="#4f6f8f" stroke-width="2" stroke-linecap="round"/></svg>
<div class="a" style="left:192px;top:232px;width:15px;height:456px;background:#efefef"></div>
<div class="a" style="left:192px;top:217px;width:15px;height:15px;background:#fff;border:1px solid #a9a9a9"></div>
<svg class="a" style="left:196px;top:221px;" width="8" height="5" viewBox="0 0 8 5"><path d="M0 4.5 H7.5 L3.75 0.5 Z" fill="#555"/></svg>
<div class="a" style="left:192px;top:231px;width:15px;height:270px;background:#fff;border:1px solid #a9a9a9"></div>
<div class="a" style="left:192px;top:688px;width:15px;height:15px;background:#fff;border:1px solid #a9a9a9"></div>
<svg class="a" style="left:196px;top:693px;" width="8" height="5" viewBox="0 0 8 5"><path d="M0 0.5 H7.5 L3.75 4.5 Z" fill="#555"/></svg>
<div class="t" style="font-size:12.3px;color:#555;top:218.00px;font-weight:bold;left:10.5px;">Tables</div>
<svg class="a" style="left:170.5px;top:220.2px;" width="8" height="8" viewBox="0 0 8 8"><path d="M0.8 3.8 L4 0.8 L7.2 3.8 M0.8 7.6 L4 4.6 L7.2 7.6" fill="none" stroke="#444" stroke-width="1.1"/></svg>
<svg class="a" style="left:13px;top:237.2px;" width="17" height="14" viewBox="0 0 17 14"><defs><linearGradient id="tg" x1="0" y1="0" x2="0" y2="1"><stop offset="0" stop-color="#f6f9fc"/><stop offset="1" stop-color="#c3d0de"/></linearGradient></defs>
<rect x="0.5" y="0.5" width="15" height="12" fill="url(#tg)" stroke="#465a70" stroke-width="1"/>
<path d="M1 2.6 H15.5" stroke="#6b819a" stroke-width="1.2"/>
<path d="M5.7 1 V12.5 M10.7 1 V12.5 M1 5.8 H15.5 M1 9.2 H15.5" stroke="#7d92aa" stroke-width="0.9"/>
<path d="M1 12 H15.5" stroke="#3a4a5c" stroke-width="1"/></svg>
<div class="t" style="font-size:11.2px;color:#555;top:240.00px;left:40.5px;">Contacts</div>
<svg class="a" style="left:13px;top:261.2px;" width="17" height="14" viewBox="0 0 17 14"><defs><linearGradient id="tg" x1="0" y1="0" x2="0" y2="1"><stop offset="0" stop-color="#f6f9fc"/><stop offset="1" stop-color="#c3d0de"/></linearGradient></defs>
<rect x="0.5" y="0.5" width="15" height="12" fill="url(#tg)" stroke="#465a70" stroke-width="1"/>
<path d="M1 2.6 H15.5" stroke="#6b819a" stroke-width="1.2"/>
<path d="M5.7 1 V12.5 M10.7 1 V12.5 M1 5.8 H15.5 M1 9.2 H15.5" stroke="#7d92aa" stroke-width="0.9"/>
<path d="M1 12 H15.5" stroke="#3a4a5c" stroke-width="1"/></svg>
<div class="t" style="font-size:11.2px;color:#555;top:264.00px;left:40.5px;">Filters</div>
<svg class="a" style="left:13px;top:285.2px;" width="17" height="14" viewBox="0 0 17 14"><defs><linearGradient id="tg" x1="0" y1="0" x2="0" y2="1"><stop offset="0" stop-color="#f6f9fc"/><stop offset="1" stop-color="#c3d0de"/></linearGradient></defs>
<rect x="0.5" y="0.5" width="15" height="12" fill="url(#tg)" stroke="#465a70" stroke-width="1"/>
<path d="M1 2.6 H15.5" stroke="#6b819a" stroke-width="1.2"/>
<path d="M5.7 1 V12.5 M10.7 1 V12.5 M1 5.8 H15.5 M1 9.2 H15.5" stroke="#7d92aa" stroke-width="0.9"/>
<path d="M1 12 H15.5" stroke="#3a4a5c" stroke-width="1"/></svg>
<div class="t" style="font-size:11.2px;color:#555;top:288.00px;left:40.5px;">Settings</div>
<svg class="a" style="left:13px;top:309.2px;" width="17" height="14" viewBox="0 0 17 14"><defs><linearGradient id="tg" x1="0" y1="0" x2="0" y2="1"><stop offset="0" stop-color="#f6f9fc"/><stop offset="1" stop-color="#c3d0de"/></linearGradient></defs>
<rect x="0.5" y="0.5" width="15" height="12" fill="url(#tg)" stroke="#465a70" stroke-width="1"/>
<path d="M1 2.6 H15.5" stroke="#6b819a" stroke-width="1.2"/>
<path d="M5.7 1 V12.5 M10.7 1 V12.5 M1 5.8 H15.5 M1 9.2 H15.5" stroke="#7d92aa" stroke-width="0.9"/>
<path d="M1 12 H15.5" stroke="#3a4a5c" stroke-width="1"/></svg>
<div class="t" style="font-size:11.2px;color:#555;top:312.00px;left:40.5px;">Tasks</div>
<div class="t" style="font-size:12.3px;color:#555;top:332.00px;font-weight:bold;left:10.5px;">Queries</div>
<svg class="a" style="left:170.5px;top:334.0px;" width="8" height="8" viewBox="0 0 8 8"><path d="M0.8 3.8 L4 0.8 L7.2 3.8 M0.8 7.6 L4 4.6 L7.2 7.6" fill="none" stroke="#444" stroke-width="1.1"/></svg>
<svg class="a" style="left:13px;top:351.7px;" width="17" height="16" viewBox="0 0 17 16"><rect x="5.5" y="0.5" width="10" height="10" fill="#eef5f8" stroke="#3e6070" stroke-width="1"/>
<rect x="5.5" y="0.5" width="10" height="2" fill="#4c7a88"/>
<path d="M7 5 H9 M7 7.5 H9 M11.5 5 H13.5 M11.5 7.5 H13.5" stroke="#6a8a98" stroke-width="0.9"/>
<rect x="0.5" y="4.5" width="10" height="10" fill="#eef5f8" stroke="#3e6070" stroke-width="1"/>
<rect x="0.5" y="4.5" width="10" height="2" fill="#4c7a88"/>
<path d="M2 9 H4 M2 12 H4 M6.5 9 H8.5 M6.5 12 H8.5" stroke="#6a8a98" stroke-width="0.9"/></svg>
<div class="t" style="font-size:11.2px;color:#555;top:354.00px;left:40.5px;">Active Contacts Extended</div>
<svg class="a" style="left:13px;top:375.7px;" width="17" height="16" viewBox="0 0 17 16"><rect x="5.5" y="0.5" width="10" height="10" fill="#eef5f8" stroke="#3e6070" stroke-width="1"/>
<rect x="5.5" y="0.5" width="10" height="2" fill="#4c7a88"/>
<path d="M7 5 H9 M7 7.5 H9 M11.5 5 H13.5 M11.5 7.5 H13.5" stroke="#6a8a98" stroke-width="0.9"/>
<rect x="0.5" y="4.5" width="10" height="10" fill="#eef5f8" stroke="#3e6070" stroke-width="1"/>
<rect x="0.5" y="4.5" width="10" height="2" fill="#4c7a88"/>
<path d="M2 9 H4 M2 12 H4 M6.5 9 H8.5 M6.5 12 H8.5" stroke="#6a8a98" stroke-width="0.9"/></svg>
<div class="t" style="font-size:11.2px;color:#555;top:378.00px;left:40.5px;">Completed Tasks</div>
<svg class="a" style="left:13px;top:399.7px;" width="17" height="16" viewBox="0 0 17 16"><rect x="5.5" y="0.5" width="10" height="10" fill="#eef5f8" stroke="#3e6070" stroke-width="1"/>
<rect x="5.5" y="0.5" width="10" height="2" fill="#4c7a88"/>
<path d="M7 5 H9 M7 7.5 H9 M11.5 5 H13.5 M11.5 7.5 H13.5" stroke="#6a8a98" stroke-width="0.9"/>
<rect x="0.5" y="4.5" width="10" height="10" fill="#eef5f8" stroke="#3e6070" stroke-width="1"/>
<rect x="0.5" y="4.5" width="10" height="2" fill="#4c7a88"/>
<path d="M2 9 H4 M2 12 H4 M6.5 9 H8.5 M6.5 12 H8.5" stroke="#6a8a98" stroke-width="0.9"/></svg>
<div class="t" style="font-size:11.2px;color:#555;top:402.00px;left:40.5px;">Contacts Extended</div>
<svg class="a" style="left:13px;top:423.7px;" width="17" height="16" viewBox="0 0 17 16"><rect x="5.5" y="0.5" width="10" height="10" fill="#eef5f8" stroke="#3e6070" stroke-width="1"/>
<rect x="5.5" y="0.5" width="10" height="2" fill="#4c7a88"/>
<path d="M7 5 H9 M7 7.5 H9 M11.5 5 H13.5 M11.5 7.5 H13.5" stroke="#6a8a98" stroke-width="0.9"/>
<rect x="0.5" y="4.5" width="10" height="10" fill="#eef5f8" stroke="#3e6070" stroke-width="1"/>
<rect x="0.5" y="4.5" width="10" height="2" fill="#4c7a88"/>
<path d="M2 9 H4 M2 12 H4 M6.5 9 H8.5 M6.5 12 H8.5" stroke="#6a8a98" stroke-width="0.9"/></svg>
<div class="t" style="font-size:11.2px;color:#555;top:426.00px;left:40.5px;">Open Tasks</div>
<svg class="a" style="left:13px;top:447.7px;" width="17" height="16" viewBox="0 0 17 16"><rect x="5.5" y="0.5" width="10" height="10" fill="#eef5f8" stroke="#3e6070" stroke-width="1"/>
<rect x="5.5" y="0.5" width="10" height="2" fill="#4c7a88"/>
<path d="M7 5 H9 M7 7.5 H9 M11.5 5 H13.5 M11.5 7.5 H13.5" stroke="#6a8a98" stroke-width="0.9"/>
<rect x="0.5" y="4.5" width="10" height="10" fill="#eef5f8" stroke="#3e6070" stroke-width="1"/>
<rect x="0.5" y="4.5" width="10" height="2" fill="#4c7a88"/>
<path d="M2 9 H4 M2 12 H4 M6.5 9 H8.5 M6.5 12 H8.5" stroke="#6a8a98" stroke-width="0.9"/></svg>
<div class="t" style="font-size:11.2px;color:#555;top:450.00px;left:40.5px;">Overdue Tasks</div>
<svg class="a" style="left:13px;top:471.7px;" width="17" height="16" viewBox="0 0 17 16"><rect x="5.5" y="0.5" width="10" height="10" fill="#eef5f8" stroke="#3e6070" stroke-width="1"/>
<rect x="5.5" y="0.5" width="10" height="2" fill="#4c7a88"/>
<path d="M7 5 H9 M7 7.5 H9 M11.5 5 H13.5 M11.5 7.5 H13.5" stroke="#6a8a98" stroke-width="0.9"/>
<rect x="0.5" y="4.5" width="10" height="10" fill="#eef5f8" stroke="#3e6070" stroke-width="1"/>
<rect x="0.5" y="4.5" width="10" height="2" fill="#4c7a88"/>
<path d="M2 9 H4 M2 12 H4 M6.5 9 H8.5 M6.5 12 H8.5" stroke="#6a8a98" stroke-width="0.9"/></svg>
<div class="t" style="font-size:11.2px;color:#555;top:474.00px;left:40.5px;">Tasks Due Today</div>
<div class="t" style="font-size:12.3px;color:#555;top:494.00px;font-weight:bold;left:10.5px;">Forms</div>
<svg class="a" style="left:170.5px;top:496.2px;" width="8" height="8" viewBox="0 0 8 8"><path d="M0.8 3.8 L4 0.8 L7.2 3.8 M0.8 7.6 L4 4.6 L7.2 7.6" fill="none" stroke="#444" stroke-width="1.1"/></svg>
<svg class="a" style="left:13px;top:513.2px;" width="16" height="15" viewBox="0 0 16 15"><defs><linearGradient id="fg" x1="0" y1="0" x2="0" y2="1"><stop offset="0" stop-color="#fbfcfe"/><stop offset="1" stop-color="#d6deea"/></linearGradient></defs>
<rect x="0.5" y="0.5" width="14" height="13" fill="url(#fg)" stroke="#4b5566" stroke-width="1"/>
<rect x="1" y="1" width="13" height="1.6" fill="#c86080"/>
<path d="M2.5 6 H5 M2.5 9.3 H5" stroke="#555" stroke-width="1"/>
<rect x="7.5" y="5" width="4.5" height="2.2" fill="none" stroke="#5a6f88" stroke-width="0.9"/>
<rect x="7.5" y="8.3" width="4.5" height="2.2" fill="none" stroke="#5a6f88" stroke-width="0.9"/></svg>
<div class="t" style="font-size:11.2px;color:#555;top:516.00px;left:40.5px;">Contact Details</div>
<svg class="a" style="left:13px;top:537.2px;" width="16" height="15" viewBox="0 0 16 15"><defs><linearGradient id="fg" x1="0" y1="0" x2="0" y2="1"><stop offset="0" stop-color="#fbfcfe"/><stop offset="1" stop-color="#d6deea"/></linearGradient></defs>
<rect x="0.5" y="0.5" width="14" height="13" fill="url(#fg)" stroke="#4b5566" stroke-width="1"/>
<rect x="1" y="1" width="13" height="1.6" fill="#c86080"/>
<path d="M2.5 6 H5 M2.5 9.3 H5" stroke="#555" stroke-width="1"/>
<rect x="7.5" y="5" width="4.5" height="2.2" fill="none" stroke="#5a6f88" stroke-width="0.9"/>
<rect x="7.5" y="8.3" width="4.5" height="2.2" fill="none" stroke="#5a6f88" stroke-width="0.9"/></svg>
<div class="t" style="font-size:11.2px;color:#555;top:540.00px;left:40.5px;">Contact List</div>
<svg class="a" style="left:13px;top:561.2px;" width="16" height="15" viewBox="0 0 16 15"><defs><linearGradient id="fg" x1="0" y1="0" x2="0" y2="1"><stop offset="0" stop-color="#fbfcfe"/><stop offset="1" stop-color="#d6deea"/></linearGradient></defs>
<rect x="0.5" y="0.5" width="14" height="13" fill="url(#fg)" stroke="#4b5566" stroke-width="1"/>
<rect x="1" y="1" width="13" height="1.6" fill="#c86080"/>
<path d="M2.5 6 H5 M2.5 9.3 H5" stroke="#555" stroke-width="1"/>
<rect x="7.5" y="5" width="4.5" height="2.2" fill="none" stroke="#5a6f88" stroke-width="0.9"/>
<rect x="7.5" y="8.3" width="4.5" height="2.2" fill="none" stroke="#5a6f88" stroke-width="0.9"/></svg>
<div class="t" style="font-size:11.2px;color:#555;top:564.00px;left:40.5px;">Filter Details</div>
<svg class="a" style="left:13px;top:585.2px;" width="16" height="15" viewBox="0 0 16 15"><defs><linearGradient id="fg" x1="0" y1="0" x2="0" y2="1"><stop offset="0" stop-color="#fbfcfe"/><stop offset="1" stop-color="#d6deea"/></linearGradient></defs>
<rect x="0.5" y="0.5" width="14" height="13" fill="url(#fg)" stroke="#4b5566" stroke-width="1"/>
<rect x="1" y="1" width="13" height="1.6" fill="#c86080"/>
<path d="M2.5 6 H5 M2.5 9.3 H5" stroke="#555" stroke-width="1"/>
<rect x="7.5" y="5" width="4.5" height="2.2" fill="none" stroke="#5a6f88" stroke-width="0.9"/>
<rect x="7.5" y="8.3" width="4.5" height="2.2" fill="none" stroke="#5a6f88" stroke-width="0.9"/></svg>
<div class="t" style="font-size:11.2px;color:#555;top:588.00px;left:40.5px;">Task Details</div>
<svg class="a" style="left:13px;top:609.2px;" width="16" height="15" viewBox="0 0 16 15"><defs><linearGradient id="fg" x1="0" y1="0" x2="0" y2="1"><stop offset="0" stop-color="#fbfcfe"/><stop offset="1" stop-color="#d6deea"/></linearGradient></defs>
<rect x="0.5" y="0.5" width="14" height="13" fill="url(#fg)" stroke="#4b5566" stroke-width="1"/>
<rect x="1" y="1" width="13" height="1.6" fill="#c86080"/>
<path d="M2.5 6 H5 M2.5 9.3 H5" stroke="#555" stroke-width="1"/>
<rect x="7.5" y="5" width="4.5" height="2.2" fill="none" stroke="#5a6f88" stroke-width="0.9"/>
<rect x="7.5" y="8.3" width="4.5" height="2.2" fill="none" stroke="#5a6f88" stroke-width="0.9"/></svg>
<div class="t" style="font-size:11.2px;color:#555;top:612.00px;left:40.5px;">Task List</div>
<svg class="a" style="left:13px;top:633.2px;" width="16" height="15" viewBox="0 0 16 15"><defs><linearGradient id="fg" x1="0" y1="0" x2="0" y2="1"><stop offset="0" stop-color="#fbfcfe"/><stop offset="1" stop-color="#d6deea"/></linearGradient></defs>
<rect x="0.5" y="0.5" width="14" height="13" fill="url(#fg)" stroke="#4b5566" stroke-width="1"/>
<rect x="1" y="1" width="13" height="1.6" fill="#c86080"/>
<path d="M2.5 6 H5 M2.5 9.3 H5" stroke="#555" stroke-width="1"/>
<rect x="7.5" y="5" width="4.5" height="2.2" fill="none" stroke="#5a6f88" stroke-width="0.9"/>
<rect x="7.5" y="8.3" width="4.5" height="2.2" fill="none" stroke="#5a6f88" stroke-width="0.9"/></svg>
<div class="t" style="font-size:11.2px;color:#555;top:636.00px;left:40.5px;">Tasks Subform</div>
<svg class="a" style="left:13px;top:657.2px;" width="16" height="15" viewBox="0 0 16 15"><defs><linearGradient id="fg" x1="0" y1="0" x2="0" y2="1"><stop offset="0" stop-color="#fbfcfe"/><stop offset="1" stop-color="#d6deea"/></linearGradient></defs>
<rect x="0.5" y="0.5" width="14" height="13" fill="url(#fg)" stroke="#4b5566" stroke-width="1"/>
<rect x="1" y="1" width="13" height="1.6" fill="#c86080"/>
<path d="M2.5 6 H5 M2.5 9.3 H5" stroke="#555" stroke-width="1"/>
<rect x="7.5" y="5" width="4.5" height="2.2" fill="none" stroke="#5a6f88" stroke-width="0.9"/>
<rect x="7.5" y="8.3" width="4.5" height="2.2" fill="none" stroke="#5a6f88" stroke-width="0.9"/></svg>
<div class="t" style="font-size:11.2px;color:#555;top:660.00px;left:40.5px;">Welcome</div>
<div class="t" style="font-size:12.3px;color:#555;top:680.00px;font-weight:bold;left:10.5px;">Reports</div>
<svg class="a" style="left:170.5px;top:682.5px;" width="8" height="8" viewBox="0 0 8 8"><path d="M0.8 3.8 L4 0.8 L7.2 3.8 M0.8 7.6 L4 4.6 L7.2 7.6" fill="none" stroke="#444" stroke-width="1.1"/></svg>
<div class="a" style="left:0;top:700px;width:190px;height:5px;overflow:hidden">
<svg class="a" style="left:13px;top:0px;top:-1.5px" width="16" height="15" viewBox="0 0 16 15"><rect x="1" y="0.5" width="14" height="13" fill="#e6f0e0" stroke="#5a8a50" stroke-width="1"/><rect x="3" y="3" width="10" height="4" fill="#7ab070"/></svg>
<div class="t" style="left:40.5px;top:3px;font-size:11.2px;color:#555">Active Tasks</div>
</div>
<div class="a" style="left:0px;top:705px;width:1022px;height:23px;background:#f1f1f1;border-top:1px solid #d0d0d0"></div>
<div class="t" style="font-size:11.2px;color:#444;top:710.00px;left:6.5px;">Form View</div>
<div class="t" style="font-size:10.9px;color:#444;top:711.00px;left:838.6px;">Num Lock</div>
<div class="a" style="left:907px;top:706px;width:38px;height:20px;background:#c6c6c6"></div>
<svg class="a" style="left:918px;top:708px;" width="16" height="15" viewBox="0 0 16 15"><rect x="1.5" y="1.5" width="13" height="12" fill="#e8e8e8" stroke="#555" stroke-width="1.2"/><rect x="1" y="1" width="14" height="3.2" fill="#555"/><path d="M3 8.3 H6.5 M3 11 H6.5" stroke="#555" stroke-width="1.1"/><rect x="8.5" y="7.3" width="5" height="2" fill="#555"/><rect x="8.5" y="10" width="5" height="2" fill="#555"/></svg>
<svg class="a" style="left:957px;top:709px;" width="14" height="14" viewBox="0 0 14 14"><path d="M1 1 H13 M1 12.7 H13 M2 1 V12.7 M12 1 V12.7 M2 7 H12" fill="none" stroke="#555" stroke-width="1.1"/><rect x="6" y="3.6" width="5.5" height="2" fill="#555"/><rect x="6" y="8.8" width="5.5" height="2" fill="#555"/></svg>
<svg class="a" style="left:994px;top:708px;" width="17" height="15" viewBox="0 0 17 15"><path d="M1.5 9.5 V1.5 L8.5 9.5 Z M3 6 V8.3 H5" fill="none" stroke="#555" stroke-width="1.1"/><path d="M7.5 9 L14 2.5" stroke="#555" stroke-width="2.2"/><path d="M6.6 10 L7.2 8.4 L8.3 9.4 Z" fill="#555"/><rect x="2" y="10.8" width="13" height="3.4" fill="none" stroke="#555" stroke-width="1.1"/><path d="M4.5 11 V12.3 M7 11 V12.3 M9.5 11 V12.3 M12 11 V12.3" stroke="#555" stroke-width="0.8"/></svg>
<div class="a" style="left:0px;top:727px;width:46px;height:1px;background:#222"></div>
<div class="a" style="left:46px;top:727px;width:319px;height:1px;background:#c8c8c8"></div>
<div class="a" style="left:365px;top:727px;width:657px;height:1px;background:#222"></div>
<div class="a" style="left:213px;top:160px;width:809px;height:545px;background:#fff"></div>
<div class="a" style="left:213px;top:160px;width:104px;height:24px;background:#f7c7c8;border-right:1px solid #e0a0a2"></div>
<svg class="a" style="left:219px;top:163px;" width="16" height="16" viewBox="0 0 16 16"><rect x="0.5" y="0.5" width="15" height="14.5" fill="#f2f4f8" stroke="#5c5c6c" stroke-width="1"/>
<rect x="0.5" y="0.5" width="15" height="2.4" fill="#c0506a"/>
<path d="M2.5 7 H6 M2.5 10.5 H6" stroke="#555" stroke-width="1"/>
<rect x="8" y="5.8" width="5.5" height="2.6" fill="#dce6f0" stroke="#4a6a8a" stroke-width="0.9"/>
<rect x="8" y="9.3" width="5.5" height="2.6" fill="#dce6f0" stroke="#4a6a8a" stroke-width="0.9"/></svg>
<div class="t" style="font-size:10.5px;color:#4a3438;top:167.00px;font-weight:bold;left:243px;">Task List</div>
<svg class="a" style="left:298px;top:167px;" width="12" height="11" viewBox="0 0 12 11"><path d="M1 0.5 L11 10.5 M11 0.5 L1 10.5" stroke="#8a6a6a" stroke-width="1"/></svg>
<div class="a" style="left:213px;top:184px;width:809px;height:59px;background:#70ad47"></div>
<div class="t" style="font-size:31px;color:#e2f1cc;top:198.00px;left:244px;transform:scaleX(0.925);transform-origin:0 0;letter-spacing:0.3px;word-spacing:0.5px">Task List</div>
<div class="a" style="left:812px;top:201.5px;width:177px;height:22.5px;background:#fff;border:1px solid #3f5a33"></div>
<div class="t" style="font-size:12.5px;color:#222;top:208.00px;left:817.3px;">Search</div>
<svg class="a" style="left:966px;top:203px;" width="20" height="19" viewBox="0 0 20 19"><circle cx="11.3" cy="7" r="4.8" fill="none" stroke="#555" stroke-width="1.3"/><path d="M7.8 10.5 L3.3 15" stroke="#555" stroke-width="1.7" stroke-linecap="round"/></svg>
<svg class="a" style="left:1007px;top:203px;" width="20" height="21" viewBox="0 0 20 21"><path d="M1 1 H19 L12 9 V20 L8 17 V9 Z" fill="#8a8a8a"/><path d="M1 1.5 L8 9.3 V19" fill="none" stroke="#d8e8c8" stroke-width="1"/></svg>
<div class="a" style="left:213px;top:243px;width:809px;height:39px;background:#e2efda"></div>
<div class="a" style="left:213px;top:282px;width:809px;height:1px;background:#a6a6a6"></div>
<svg class="a" style="left:244px;top:250px;" width="30" height="24" viewBox="0 0 30 24"><rect x="4.5" y="9.2" width="21" height="11.5" fill="#fff" stroke="#7a7060" stroke-width="1"/>
<rect x="7.2" y="12.2" width="16" height="5.4" fill="#4a7ab8"/>
<g stroke="#f2d090" stroke-width="1.1"><path d="M7.4 2.3 V10.3 M3.4 6.3 H11.4 M4.6 3.5 L10.2 9.1 M10.2 3.5 L4.6 9.1"/></g></svg>
<div class="t" style="font-size:13px;color:#222;top:258.00px;left:280.5px;"><u style="text-decoration-thickness:1px;text-underline-offset:1px">N</u>ew Task</div>
<svg class="a" style="left:366px;top:250px;" width="26" height="22" viewBox="0 0 26 22"><rect x="2.5" y="6.5" width="20.5" height="13" fill="#fff" stroke="#6a6a6a" stroke-width="1"/>
<rect x="17" y="9.3" width="3.4" height="3.2" fill="#4a5a6a"/>
<path d="M6 15 H15" stroke="#999" stroke-width="1.2"/>
<path d="M5.5 12 V3 Q5.5 1 7 1 Q8.5 1 8.5 3 V10 Q8.5 11.5 7 11.5 Q5.8 11.5 5.8 10 V4" fill="none" stroke="#777" stroke-width="1"/></svg>
<div class="t" style="font-size:12.7px;color:#222;top:259.00px;left:400px;"><u style="text-decoration-thickness:1px;text-underline-offset:1px">E</u>-mail List</div>
<svg class="a" style="left:486px;top:251px;" width="24" height="23" viewBox="0 0 24 23"><rect x="2.5" y="2.5" width="20" height="19" fill="#fff" stroke="#6a6a6a" stroke-width="1"/>
<rect x="2" y="2" width="21" height="3.6" fill="#4a72a0"/>
<circle cx="8" cy="10.2" r="2.6" fill="#4a6a8a"/><path d="M3.8 18 Q3.8 13.6 8 13.6 Q12.2 13.6 12.2 18 Z" fill="#4a6a8a"/>
<path d="M13.5 8 V19" stroke="#777" stroke-width="0.9"/>
<path d="M15.5 8.5 H20 M15.5 14.5 H20 M15.5 16.5 H20 M15.5 18.5 H20" stroke="#8a8a8a" stroke-width="0.8"/><path d="M15.5 11 H20" stroke="#d8a0a0" stroke-width="0.8"/></svg>
<div class="t" style="font-size:12.7px;color:#222;top:259.00px;left:520px;"><u style="text-decoration-thickness:1px;text-underline-offset:1px">C</u>ontact List</div>
<svg class="a" style="left:617px;top:250px;" width="26" height="25" viewBox="0 0 26 25"><rect x="2.5" y="2.5" width="20" height="20" fill="#fbfcfe"/>
<path d="M2.5 22.5 V2.5 H22.5" fill="none" stroke="#999" stroke-width="1" stroke-dasharray="1 1"/>
<path d="M2.5 22.5 L22.5 2.5 V22.5 Z" fill="#fff" stroke="#555" stroke-width="1"/>
<path d="M18 7 L22.5 2.5 V7 Z" fill="#4a5a6a"/>
<path d="M17 8 V22.5 M11 14 V22.5 M9 17 H22.5 M14 12 H22.5" stroke="#999" stroke-width="0.8"/></svg>
<div class="t" style="font-size:12.7px;color:#222;top:259.00px;left:650px;">Show/Hide <u style="text-decoration-thickness:1px;text-underline-offset:1px">F</u>ields</div>
<div class="t" style="font-size:12.7px;color:#222;top:259.00px;left:840px;"><u style="text-decoration-thickness:1px;text-underline-offset:1px">R</u>eports</div>
<div class="a" style="left:896px;top:251.5px;width:97px;height:23px;background:#fff;border:1px solid #b4b4b4"></div>
<div class="a" style="left:975px;top:251.5px;width:18px;height:23px;background:#dedede;border:1px solid #b0b0b0"></div>
<svg class="a" style="left:978px;top:258px;" width="12" height="8" viewBox="0 0 12 8"><path d="M1.5 1.5 L6 6 L10.5 1.5" fill="none" stroke="#555" stroke-width="1.1"/></svg>
<div class="a" style="left:213px;top:283px;width:809px;height:18px;background:#dfe3e8"></div>
<div class="a" style="left:213px;top:283px;width:18px;height:49px;background:#dfe3e8"></div>
<div class="a" style="left:213px;top:332px;width:18px;height:356px;background:#f6f7fb"></div>
<div class="a" style="left:231px;top:301px;width:791px;height:1px;background:#c6cad0"></div>
<div class="a" style="left:230px;top:301px;width:1px;height:31px;background:#c6c6c6"></div>
<div class="a" style="left:230px;top:333px;width:1px;height:355px;background:#e4e4e8"></div>
<svg class="a" style="left:216px;top:287px;" width="13" height="12" viewBox="0 0 13 12"><path d="M12 0.5 V11.5 H1 Z" fill="#eef0f4"/></svg>
<div class="a" style="left:327px;top:283px;width:1px;height:18px;background:#b8bcc4"></div>
<div class="a" style="left:327px;top:302px;width:1px;height:30px;background:#c6c6c6"></div>
<div class="a" style="left:327px;top:333px;width:1px;height:355px;background:#ececec"></div>
<div class="a" style="left:480px;top:283px;width:1px;height:18px;background:#b8bcc4"></div>
<div class="a" style="left:480px;top:302px;width:1px;height:30px;background:#c6c6c6"></div>
<div class="a" style="left:480px;top:333px;width:1px;height:355px;background:#ececec"></div>
<div class="a" style="left:575px;top:283px;width:1px;height:18px;background:#b8bcc4"></div>
<div class="a" style="left:575px;top:302px;width:1px;height:30px;background:#c6c6c6"></div>
<div class="a" style="left:575px;top:333px;width:1px;height:355px;background:#ececec"></div>
<div class="a" style="left:675px;top:283px;width:1px;height:18px;background:#b8bcc4"></div>
<div class="a" style="left:675px;top:302px;width:1px;height:30px;background:#c6c6c6"></div>
<div class="a" style="left:675px;top:333px;width:1px;height:355px;background:#ececec"></div>
<div class="a" style="left:778px;top:283px;width:1px;height:18px;background:#b8bcc4"></div>
<div class="a" style="left:778px;top:302px;width:1px;height:30px;background:#c6c6c6"></div>
<div class="a" style="left:778px;top:333px;width:1px;height:355px;background:#ececec"></div>
<div class="a" style="left:917px;top:283px;width:1px;height:18px;background:#b8bcc4"></div>
<div class="a" style="left:917px;top:302px;width:1px;height:30px;background:#c6c6c6"></div>
<div class="a" style="left:917px;top:333px;width:1px;height:355px;background:#ececec"></div>
<div class="a" style="left:1006px;top:283px;width:1px;height:18px;background:#b8bcc4"></div>
<div class="a" style="left:1006px;top:302px;width:1px;height:30px;background:#c6c6c6"></div>
<div class="a" style="left:1006px;top:333px;width:1px;height:355px;background:#ececec"></div>
<div class="a" style="left:213px;top:332px;width:809px;height:1px;background:#c6c6c6"></div>
<div class="a" style="left:213px;top:363px;width:809px;height:1px;background:#ececec"></div>
<div class="a" style="left:213px;top:394px;width:809px;height:1px;background:#ececec"></div>
<div class="a" style="left:213px;top:425px;width:809px;height:1px;background:#ececec"></div>
<div class="a" style="left:213px;top:456px;width:809px;height:1px;background:#ececec"></div>
<div class="a" style="left:213px;top:487px;width:809px;height:1px;background:#ececec"></div>
<div class="a" style="left:213px;top:518px;width:809px;height:1px;background:#ececec"></div>
<div class="a" style="left:213px;top:549px;width:809px;height:1px;background:#ececec"></div>
<div class="a" style="left:213px;top:580px;width:809px;height:1px;background:#ececec"></div>
<div class="a" style="left:213px;top:611px;width:809px;height:1px;background:#ececec"></div>
<div class="a" style="left:213px;top:642px;width:809px;height:1px;background:#ececec"></div>
<div class="a" style="left:213px;top:673px;width:809px;height:1px;background:#ececec"></div>
<div class="t" style="font-size:12.6px;color:#444;top:287.00px;left:171.95px;width:200px;text-align:center;">Open</div>
<svg class="a" style="left:314px;top:290px;" width="8" height="5" viewBox="0 0 8 5"><path d="M0.5 0.5 H7 L3.75 4 Z" fill="#333"/></svg>
<div class="t" style="font-size:12.8px;color:#444;top:287.00px;left:296.65px;width:200px;text-align:center;">Task Title</div>
<svg class="a" style="left:467px;top:290px;" width="8" height="5" viewBox="0 0 8 5"><path d="M0.5 0.5 H7 L3.75 4 Z" fill="#333"/></svg>
<div class="t" style="font-size:12.8px;color:#444;top:287.00px;left:420.6500000000001px;width:200px;text-align:center;">Priority</div>
<svg class="a" style="left:562px;top:290px;" width="8" height="5" viewBox="0 0 8 5"><path d="M0.5 0.5 H7 L3.75 4 Z" fill="#333"/></svg>
<div class="t" style="font-size:12.8px;color:#444;top:287.00px;left:518.2px;width:200px;text-align:center;">Status</div>
<svg class="a" style="left:662px;top:290px;" width="8" height="5" viewBox="0 0 8 5"><path d="M0.5 0.5 H7 L3.75 4 Z" fill="#333"/></svg>
<div class="t" style="font-size:12.8px;color:#444;top:287.00px;left:619.75px;width:200px;text-align:center;">% Complete</div>
<svg class="a" style="left:765px;top:290px;" width="8" height="5" viewBox="0 0 8 5"><path d="M0.5 0.5 H7 L3.75 4 Z" fill="#333"/></svg>
<div class="t" style="font-size:12.8px;color:#444;top:287.00px;left:740.7px;width:200px;text-align:center;">Assigned To</div>
<svg class="a" style="left:904px;top:290px;" width="8" height="5" viewBox="0 0 8 5"><path d="M0.5 0.5 H7 L3.75 4 Z" fill="#333"/></svg>
<div class="t" style="font-size:12.8px;color:#444;top:287.00px;left:854.6500000000001px;width:200px;text-align:center;">Start Date</div>
<svg class="a" style="left:993px;top:290px;" width="8" height="5" viewBox="0 0 8 5"><path d="M0.5 0.5 H7 L3.75 4 Z" fill="#333"/></svg>
<div class="t" style="font-size:12.8px;color:#444;top:287.00px;left:1015px;">D</div>
<svg class="a" style="left:217px;top:307px;" width="11" height="11" viewBox="0 0 11 11"><path d="M5.5 0.5 V10.5 M1.2 3 L9.8 8 M9.8 3 L1.2 8" stroke="#333" stroke-width="1.2"/></svg>
<div class="t" style="font-size:12.6px;color:#2a5a9a;top:307.00px;left:263.4px;"><u style="text-decoration-thickness:1px;text-underline-offset:1px">(New)</u></div>
<div class="t" style="font-size:13.3px;color:#333;top:306.00px;left:484px;">(2) Normal</div>
<div class="t" style="font-size:13.3px;color:#333;top:306.00px;left:579px;">Not Started</div>
<div class="t" style="font-size:13px;color:#333;top:306.00px;left:716px;width:60px;text-align:right;">0%</div>
<div class="t" style="font-size:13px;color:#333;top:306.00px;left:904.3px;width:100px;text-align:right;">12/20/2019</div>
<div class="a" style="left:213px;top:688px;width:359px;height:17px;background:linear-gradient(#f2f2f2,#e4e4e4);border-top:1px solid #c8c8c8"></div>
<div class="t" style="font-size:11px;color:#555;top:693.00px;left:217.7px;">Task</div>
<svg class="a" style="left:247px;top:694px;" width="9" height="8" viewBox="0 0 9 8"><path d="M1 0.5 V7.5" stroke="#333" stroke-width="1.3"/><path d="M8 0.5 V7.5 L2.5 4 Z" fill="#333"/></svg>
<svg class="a" style="left:265px;top:694px;" width="6" height="8" viewBox="0 0 6 8"><path d="M5.5 0.5 V7.5 L0.5 4 Z" fill="#b8b8b8"/></svg>
<div class="a" style="left:276.5px;top:690px;width:49px;height:15px;background:#fff;border:1px solid #c8c8c8"></div>
<svg class="a" style="left:334px;top:694px;" width="6" height="8" viewBox="0 0 6 8"><path d="M0.5 0.5 V7.5 L5.5 4 Z" fill="#b8b8b8"/></svg>
<svg class="a" style="left:350px;top:694px;" width="9" height="8" viewBox="0 0 9 8"><path d="M8 0.5 V7.5" stroke="#333" stroke-width="1.3"/><path d="M1 0.5 V7.5 L6.5 4 Z" fill="#333"/></svg>
<svg class="a" style="left:364px;top:693px;" width="14" height="10" viewBox="0 0 14 10"><path d="M0.5 1.5 V8.5 L5.5 5 Z" fill="#333"/><g stroke="#f0a050" stroke-width="0.9"><path d="M10 1.5 V8.5 M6.5 5 H13.5 M7.5 2.5 L12.5 7.5 M12.5 2.5 L7.5 7.5"/></g></svg>
<div class="a" style="left:382px;top:689px;width:1px;height:16px;background:#c8c8c8"></div>
<svg class="a" style="left:391px;top:690px;" width="16" height="16" viewBox="0 0 16 16"><path d="M0.5 1 H12.5 L8 6 V13 L5 11 V6 Z" fill="#666"/><path d="M8 9 L14 15 M14 9 L8 15" stroke="#d04040" stroke-width="1.3"/></svg>
<div class="t" style="font-size:11.8px;color:#666;top:693.00px;left:410.5px;">Unfiltered</div>
<div class="a" style="left:470px;top:689px;width:1px;height:16px;background:#c8c8c8"></div>
<div class="a" style="left:476px;top:690px;width:70px;height:15px;background:#fff;border:1px solid #c8c8c8"></div>
<div class="t" style="font-size:10.8px;color:#111;top:693.00px;left:478.6px;">Search</div>
<div class="a" style="left:569px;top:689px;width:1px;height:16px;background:#c8c8c8"></div>
<div class="a" style="left:572px;top:688px;width:450px;height:17px;background:#c9c9c9"></div>
<div class="a" style="left:573px;top:689px;width:13px;height:15px;background:#fff;border:1px solid #b0b0b0"></div>
<svg class="a" style="left:576px;top:693px;" width="6" height="8" viewBox="0 0 6 8"><path d="M5 0.5 V7.5 L1 4 Z" fill="#555"/></svg>
<div class="a" style="left:587px;top:689px;width:175px;height:15px;background:#fff;border:1px solid #b8b8b8"></div>
<div class="a" style="left:1006px;top:689px;width:14px;height:15px;background:#fff;border:1px solid #b0b0b0"></div>
<svg class="a" style="left:1010px;top:693px;" width="6" height="8" viewBox="0 0 6 8"><path d="M1 0.5 V7.5 L5 4 Z" fill="#555"/></svg>
</body></html>
